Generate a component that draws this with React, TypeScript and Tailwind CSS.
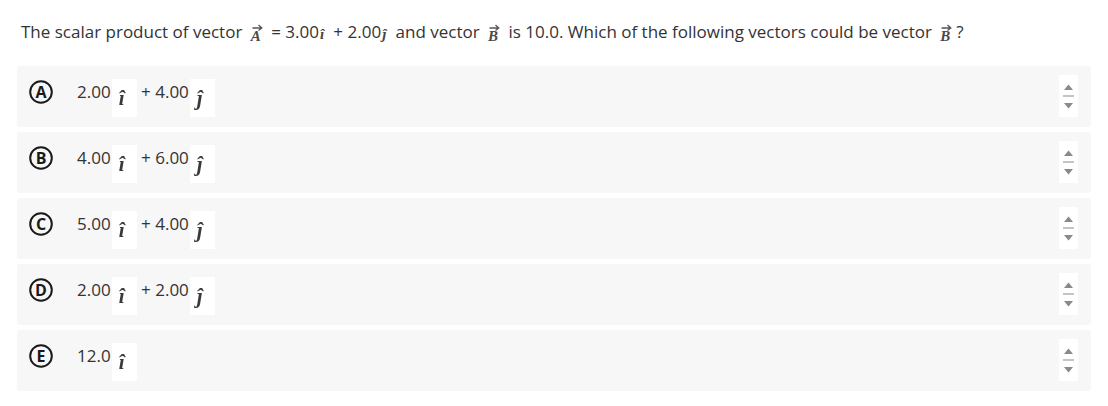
import React from "react";

const font = { fontFamily: '"Open Sans", "Liberation Sans", sans-serif' };
const serif = { fontFamily: '"Liberation Serif", "DejaVu Serif", serif' };

function VecImg({ letter }: { letter: string }) {
  return (
    <span className="relative inline-block w-[14px] h-[18px] mx-[3px] align-[-4px] bg-white">
      <svg className="absolute left-[2px] top-[0px]" width="11" height="7" viewBox="0 0 11 7">
        <path d="M0.5 4 L9.5 4 M6.5 1 L9.8 4 L6.5 6.5" stroke="#555" strokeWidth="1.3" fill="none" />
      </svg>
      <span
        className="absolute left-[1px] top-[5px] text-[15px] leading-[15px] italic font-bold text-[#4a4a4a]"
        style={serif}
      >
        {letter}
      </span>
    </span>
  );
}

function UnitSmall({ ch }: { ch: string }) {
  return (
    <span className="relative inline-block w-[10px] h-[20px] bg-white align-[-6px]">
      <span
        className="absolute left-[1px] top-[1px] italic font-bold text-[15px] leading-[18px] text-[#444]"
        style={serif}
      >
        {ch}
      </span>
    </span>
  );
}

function UnitBox({ ch }: { ch: string }) {
  return (
    <span className="relative shrink-0 block w-[25px] h-[38px] bg-white">
      <span
        className="absolute left-[7px] top-[6px] italic font-bold text-[21px] leading-[26px] text-[#3a3a3a] blur-[0.4px]"
        style={serif}
      >
        {ch}
      </span>
    </span>
  );
}

function Spinner() {
  return (
    <div className="w-[19px] h-[42px] bg-white flex flex-col items-center pt-[9px]">
      <svg width="11" height="30" viewBox="0 0 11 30">
        <polygon points="1,6 10,6 5.5,0.5" fill="#8a8a8a" />
        <rect x="0" y="11.5" width="11" height="1" fill="#8a8a8a" />
        <polygon points="1,19 10,19 5.5,24.5" fill="#8a8a8a" />
      </svg>
    </div>
  );
}

function LetterCircle({ letter }: { letter: string }) {
  return (
    <div className="relative shrink-0 w-[24px] h-[24px] mt-[1px]">
      <svg className="absolute left-0 top-0" width="24" height="24" viewBox="0 0 24 24">
        <circle cx="12" cy="12" r="10.8" fill="none" stroke="#1a1a1a" strokeWidth="2" />
      </svg>
      <div className="absolute inset-0 flex items-center justify-center text-[16px] leading-[16px] font-bold text-[#1a1a1a]">
        {letter}
      </div>
    </div>
  );
}

type Opt = { letter: string; parts: { num: string; unit: string; plus?: boolean }[] };

const options: Opt[] = [
  { letter: "A", parts: [{ num: "2.00", unit: "î" }, { num: "4.00", unit: "ĵ", plus: true }] },
  { letter: "B", parts: [{ num: "4.00", unit: "î" }, { num: "6.00", unit: "ĵ", plus: true }] },
  { letter: "C", parts: [{ num: "5.00", unit: "î" }, { num: "4.00", unit: "ĵ", plus: true }] },
  { letter: "D", parts: [{ num: "2.00", unit: "î" }, { num: "2.00", unit: "ĵ", plus: true }] },
  { letter: "E", parts: [{ num: "12.0", unit: "î" }] },
];

export default function App() {
  return (
    <div className="w-[1108px] h-[406px] bg-white text-[#333]" style={font}>
      <div className="pl-[21px] pt-[20px] h-[44px] text-[17px] leading-[24px] whitespace-nowrap">
        The scalar product of vector <VecImg letter="A" /> = 3.00<UnitSmall ch="î" /> + 2.00<UnitSmall ch="ĵ" /> and vector{" "}
        <VecImg letter="B" /> is 10.0. Which of the following vectors could be vector <VecImg letter="B" />?
      </div>
      <div className="mt-[22px] ml-[17px] w-[1074px] flex flex-col gap-[5px]">
        {options.map((o) => (
          <div key={o.letter} className="h-[61px] bg-[#f7f7f7] rounded-[3px] flex items-start pt-[13px] pl-[12px] pr-[13px]">
            <LetterCircle letter={o.letter} />
            <div className="ml-[24px] flex items-start">
              {o.parts.map((p, i) => (
                <React.Fragment key={i}>
                  <span className="text-[17px] leading-[24px] mt-[1px] mr-[1px] text-[#333] whitespace-pre">
                    {p.plus ? " + " : ""}
                    {p.num}
                  </span>
                  <UnitBox ch={p.unit} />
                </React.Fragment>
              ))}
            </div>
            <div className="ml-auto mt-[-4px]">
              <Spinner />
            </div>
          </div>
        ))}
      </div>
    </div>
  );
}
